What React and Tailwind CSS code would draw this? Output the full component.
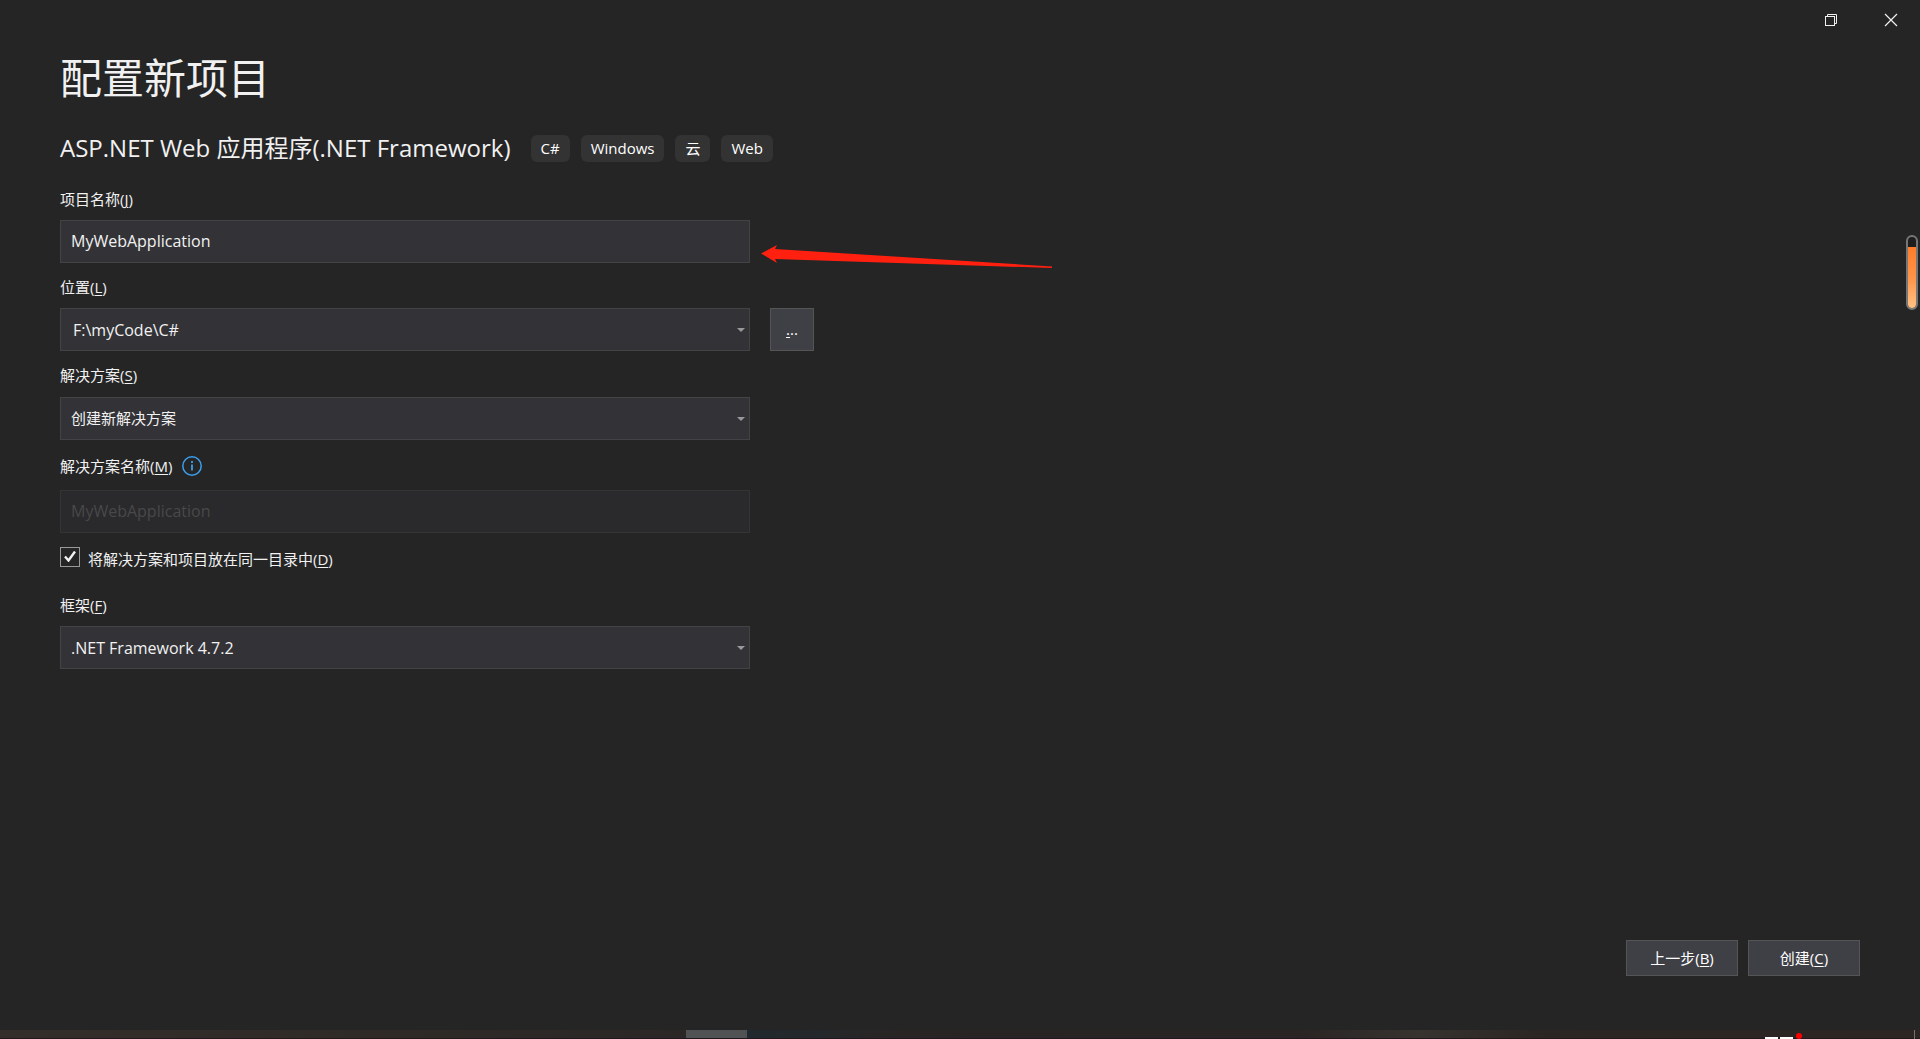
import React, { useState } from "react";

const tags = ["C#", "Windows", "云", "Web"];

const fieldStyle = "block w-full h-[43px] border border-[#434346] bg-[#333337] text-[#f1f1f1] outline-none";

const buttonStyle = "border border-[#555555] bg-[#3f3f46] text-[15px] text-white hover:bg-[#4a4a52]";

const Label = ({ htmlFor, text, hotkey }) => (
  <label htmlFor={htmlFor} className="block h-6 leading-6 text-[15px] text-[#f1f1f1]">
    {text}(<u className="underline-offset-2">{hotkey}</u>)
  </label>
);

const SelectBox = ({ id, value, onChange, options, className = "pl-[10px] text-base" }) => (
  <div className="relative">
    <select
      id={id}
      value={value}
      onChange={(e) => onChange(e.target.value)}
      className={`${fieldStyle} appearance-none pr-6 ${className}`}
    >
      {options.map((option) => (
        <option key={option} value={option}>{option}</option>
      ))}
    </select>
    <svg className="absolute right-[5px] top-5 pointer-events-none" width="8" height="4" viewBox="0 0 8 4">
      <path d="M0 0H8L4 4Z" fill="#999999" />
    </svg>
  </div>
);

const TitleBar = () => (
  <header className="flex justify-end h-10">
    <button type="button" aria-label="还原" className="flex items-center justify-center w-[60px] h-10">
      <svg width="14" height="14" viewBox="0 0 14 14" fill="none" stroke="#f1f1f1">
        <path d="M3.5 3.5V1.5H12.5V10.5H10.5" />
        <rect x="1.5" y="3.5" width="9" height="9" />
      </svg>
    </button>
    <button type="button" aria-label="关闭" className="flex items-center justify-center w-[59px] h-10">
      <svg width="14" height="14" viewBox="0 0 14 14" fill="none" stroke="#f1f1f1" strokeWidth="1.2">
        <path d="M1 1L13 13M13 1L1 13" />
      </svg>
    </button>
  </header>
);

const App = () => {
  const [projectName, setProjectName] = useState("MyWebApplication");
  const [location, setLocation] = useState("F:\\myCode\\C#");
  const [solution, setSolution] = useState("创建新解决方案");
  const [sameFolder, setSameFolder] = useState(true);
  const [framework, setFramework] = useState(".NET Framework 4.7.2");

  return (
    <div className="relative flex flex-col min-h-screen overflow-hidden bg-[#252526] text-[#f1f1f1] font-['Open_Sans','Noto_Sans_CJK_SC',sans-serif]">
      <TitleBar />

      <main className="flex-1 px-[60px]">
        <h1 className="mt-2 h-[60px] leading-[60px] text-[42px]">配置新项目</h1>

        <div className="flex items-center gap-5 mt-6 h-8">
          <h2 className="text-2xl whitespace-nowrap">ASP.NET Web 应用程序(.NET Framework)</h2>
          <ul className="flex gap-[11px]">
            {tags.map((tag) => (
              <li key={tag} className="h-[27px] px-[10px] leading-[27px] rounded-md bg-[#333333] text-[15px] text-white">
                {tag}
              </li>
            ))}
          </ul>
        </div>

        <form className="max-w-[690px] mt-[23px]" onSubmit={(e) => e.preventDefault()}>
          <Label htmlFor="project-name" text="项目名称" hotkey="J" />
          <div className="relative mt-[9px]">
            <input
              id="project-name"
              type="text"
              value={projectName}
              onChange={(e) => setProjectName(e.target.value)}
              className={`${fieldStyle} px-[10px] pb-[2px] text-base`}
            />
            {/* Arrow pointing at the name box */}
            <svg className="absolute left-full top-6 ml-[10px] pointer-events-none" width="294" height="24" viewBox="0 0 294 24">
              <path d="M1 9.5L17 1L15 5L292 22.5V24L15 15L17 19Z" fill="#ff2010" />
            </svg>
          </div>

          <div className="mt-3">
            <Label htmlFor="location" text="位置" hotkey="L" />
            <div className="relative mt-[9px]">
              <SelectBox
                id="location"
                value={location}
                onChange={setLocation}
                options={["F:\\myCode\\C#"]}
                className="pl-3 text-base"
              />
              <button type="button" aria-label="浏览" className={`${buttonStyle} absolute left-full top-0 ml-5 w-11 h-[43px]`}>
                <u className="underline-offset-2">.</u>..
              </button>
            </div>
          </div>

          <div className="mt-3">
            <Label htmlFor="solution" text="解决方案" hotkey="S" />
            <div className="mt-[10px]">
              <SelectBox
                id="solution"
                value={solution}
                onChange={setSolution}
                options={["创建新解决方案", "添加到解决方案"]}
                className="pl-[10px] text-[15px]"
              />
            </div>
          </div>

          <div className="mt-[14px]">
            <div className="flex items-center gap-[10px]">
              <Label htmlFor="solution-name" text="解决方案名称" hotkey="M" />
              <svg width="20" height="20" viewBox="0 0 20 20" fill="none" stroke="#3a9fee">
                <circle cx="10" cy="10" r="9.2" strokeWidth="1.5" />
                <path d="M10 8.5V14.5M10 5V7" strokeWidth="1.8" />
              </svg>
            </div>
            <input
              id="solution-name"
              type="text"
              value={projectName}
              disabled
              className="block w-full h-[43px] mt-3 px-[10px] pb-[2px] border border-[#343436] bg-[#2a2a2c] text-base text-[#484848]"
            />
          </div>

          <div className="flex items-start gap-2 mt-[14px]">
            <div className="relative w-5 h-5">
              <input
                id="same-folder"
                type="checkbox"
                checked={sameFolder}
                onChange={(e) => setSameFolder(e.target.checked)}
                className="peer block appearance-none w-5 h-5 border border-[#999999] bg-[#252526]"
              />
              <svg className="absolute left-1 top-1 hidden peer-checked:block pointer-events-none" width="12" height="11" viewBox="0 0 12 11">
                <path d="M1 5.5L4.5 9.5L11 0.5" fill="none" stroke="#f1f1f1" strokeWidth="2.4" />
              </svg>
            </div>
            <Label htmlFor="same-folder" text="将解决方案和项目放在同一目录中" hotkey="D" />
          </div>

          <div className="mt-[22px]">
            <Label htmlFor="framework" text="框架" hotkey="F" />
            <div className="mt-[9px]">
              <SelectBox
                id="framework"
                value={framework}
                onChange={setFramework}
                options={[".NET Framework 4.7.2"]}
              />
            </div>
          </div>
        </form>
      </main>

      <footer className="flex justify-end gap-[10px] px-[60px] pb-[54px]">
        <button type="button" className={`${buttonStyle} w-28 h-9`}>
          上一步(<u className="underline-offset-2">B</u>)
        </button>
        <button type="button" className={`${buttonStyle} w-28 h-9`}>
          创建(<u className="underline-offset-2">C</u>)
        </button>
      </footer>

      {/* Taskbar edge */}
      <div className="relative h-[9px] border-b border-[#201820] bg-linear-to-r from-[#332e2a] via-[#282424] to-[#2c2523]">
        <div className="absolute left-[686px] top-0 w-[61px] h-2 bg-[#515254]"></div>
        <div className="absolute left-[747px] top-0 w-[150px] h-2 bg-linear-to-r from-[#20292e] to-transparent"></div>
        <div className="absolute left-[1300px] top-0 w-[240px] h-2 bg-linear-to-r from-transparent via-[#37332f] to-transparent"></div>
        <div className="absolute right-[142px] bottom-[-1px] w-[13px] h-[2px] bg-white"></div>
        <div className="absolute right-[127px] bottom-[-1px] w-[13px] h-[2px] bg-white"></div>
        <div className="absolute right-[118px] top-[3px] size-[6px] rounded-full bg-[#ff0000]"></div>
        <div className="absolute right-[5px] top-0 w-px h-[9px] bg-[#77716e]"></div>
      </div>

      {/* Floating gauge on the right edge */}
      <div className="absolute right-[2px] top-[235px] flex flex-col w-3 h-[75px] pt-[10px] border-2 border-[#777777] rounded-full overflow-hidden bg-[#1e1e1e]">
        <div className="flex-1 bg-linear-to-b from-[#ff7d2a] via-[#ff9347] to-[#ffc184]"></div>
      </div>
    </div>
  );
};

export default App;
